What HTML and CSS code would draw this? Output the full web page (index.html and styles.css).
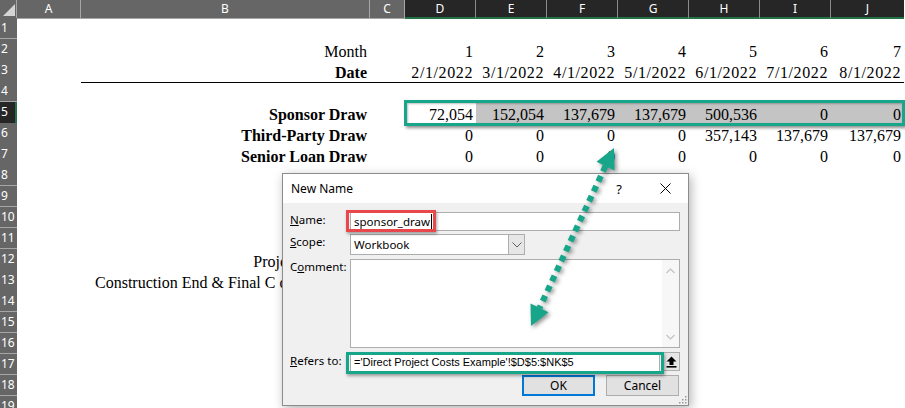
FILE: index.html
```html
<!DOCTYPE html>
<html>
<head>
<meta charset="utf-8">
<link rel="stylesheet" href="styles.css">
</head>
<body>
<div class="sheet">
  <div class="row hdr">
    <div class="corner"><svg width="17" height="18" viewBox="0 0 17 18"><polygon points="3,16 15,16 15,4" fill="#d4d4d4"/></svg></div>
    <div>A</div><div>B</div><div>C</div>
    <div class="sel">D</div><div class="sel">E</div><div class="sel">F</div><div class="sel">G</div><div class="sel">H</div><div class="sel">I</div><div class="sel last">J</div>
  </div>
  <div class="row"><div class="rn">1</div></div>
  <div class="row"><div class="rn">2</div>
    <div class="c b">Month</div>
    <div class="c d">1</div><div class="c e">2</div><div class="c f">3</div><div class="c g">4</div><div class="c h">5</div><div class="c i">6</div><div class="c j">7</div>
  </div>
  <div class="row"><div class="rn">3</div>
    <div class="rule"></div>
    <div class="c b bold">Date</div>
    <div class="c d dt">2/1/2022</div><div class="c e dt">3/1/2022</div><div class="c f dt">4/1/2022</div><div class="c g dt">5/1/2022</div><div class="c h dt">6/1/2022</div><div class="c i dt">7/1/2022</div><div class="c j dt">8/1/2022</div>
  </div>
  <div class="row"><div class="rn">4</div></div>
  <div class="row"><div class="rn sel">5</div>
    <div class="selbg"></div>
    <div class="c b bold">Sponsor Draw</div>
    <div class="c d">72,054</div><div class="c e">152,054</div><div class="c f">137,679</div><div class="c g">137,679</div><div class="c h">500,536</div><div class="c i">0</div><div class="c j">0</div>
  </div>
  <div class="row"><div class="rn">6</div>
    <div class="c b bold">Third-Party Draw</div>
    <div class="c d">0</div><div class="c e">0</div><div class="c f">0</div><div class="c g">0</div><div class="c h">357,143</div><div class="c i">137,679</div><div class="c j">137,679</div>
  </div>
  <div class="row"><div class="rn">7</div>
    <div class="c b bold">Senior Loan Draw</div>
    <div class="c d">0</div><div class="c e">0</div><div class="c f">0</div><div class="c g">0</div><div class="c h">0</div><div class="c i">0</div><div class="c j">0</div>
  </div>
  <div class="row"><div class="rn">8</div></div>
  <div class="row"><div class="rn">9</div></div>
  <div class="row"><div class="rn">10</div></div>
  <div class="row"><div class="rn">11</div></div>
  <div class="row"><div class="rn">12</div><div class="c b">Project Start Date</div></div>
  <div class="row"><div class="rn">13</div><div class="c b">Construction End &amp; Final C of O Month #</div></div>
  <div class="row"><div class="rn">14</div></div>
  <div class="row"><div class="rn">15</div></div>
  <div class="row"><div class="rn">16</div></div>
  <div class="row"><div class="rn">17</div></div>
  <div class="row"><div class="rn">18</div></div>
  <div class="row"><div class="rn">19</div></div>
</div>

<div class="range-box"></div>

<div class="dlg">
  <div class="dlg-title">
    <span class="dlg-name">New Name</span>
    <span class="tbtn">?</span>
    <span class="tbtn"><svg width="11" height="11" viewBox="0 0 11 11"><path d="M0.5 0.5 L10.5 10.5 M10.5 0.5 L0.5 10.5" stroke="#000" stroke-width="1"/></svg></span>
  </div>
  <div class="dlg-body">
    <div class="drow">
      <div class="lbl"><u>N</u>ame:</div>
      <div class="inp"><span class="caret">sponsor_draw</span></div>
    </div>
    <div class="drow m3">
      <div class="lbl"><u>S</u>cope:</div>
      <div class="combo"><span class="combo-txt">Workbook</span><span class="combo-btn"><svg width="10" height="6" viewBox="0 0 10 6"><path d="M0.5 0.5 L5 5 L9.5 0.5" fill="none" stroke="#606060" stroke-width="1"/></svg></span></div>
    </div>
    <div class="drow m4">
      <div class="lbl">C<u>o</u>mment:</div>
      <div class="area"><div class="sbar">
        <svg width="9" height="6" viewBox="0 0 9 6"><path d="M0.5 5 L4.5 1 L8.5 5" fill="none" stroke="#c2c2c2" stroke-width="1.2"/></svg>
        <svg width="9" height="6" viewBox="0 0 9 6"><path d="M0.5 1 L4.5 5 L8.5 1" fill="none" stroke="#c2c2c2" stroke-width="1.2"/></svg>
      </div></div>
    </div>
    <div class="drow m5">
      <div class="lbl"><u>R</u>efers to:</div>
      <div class="inp ref">='Direct Project Costs Example'!$D$5:$NK$5</div>
      <div class="refbtn"><svg width="11" height="12" viewBox="0 0 11 12"><polygon points="5.5,0.5 10.5,5.5 7.5,5.5 7.5,9 3.5,9 3.5,5.5 0.5,5.5" fill="#000"/><rect x="0.5" y="10" width="10" height="1.6" fill="#000"/></svg></div>
    </div>
    <div class="btns">
      <div class="btn ok">OK</div>
      <div class="btn">Cancel</div>
    </div>
  </div>
  <svg class="grip" width="9" height="9" viewBox="0 0 9 9"><g fill="#9a9a9a"><rect x="7" y="1" width="1.5" height="1.5"/><rect x="4" y="4" width="1.5" height="1.5"/><rect x="7" y="4" width="1.5" height="1.5"/><rect x="1" y="7" width="1.5" height="1.5"/><rect x="4" y="7" width="1.5" height="1.5"/><rect x="7" y="7" width="1.5" height="1.5"/></g></svg>
  <div class="name-box"></div>
  <div class="ref-box"></div>
</div>

<svg class="arrow" width="905" height="408" viewBox="0 0 905 408">
  <g fill="#17a689">
    <line x1="605.5" y1="166" x2="539.5" y2="308" stroke="#17a689" stroke-width="6" stroke-dasharray="6 5"/>
    <polygon points="614,148 614.5,170.5 596.5,161.7"/>
    <polygon points="531,326 548.5,312.2 530.5,303.6"/>
  </g>
</svg>
</body>
</html>
```

FILE: styles.css
```css
* { box-sizing: border-box; }

body {
  margin: 0;
  width: 905px;
  height: 408px;
  overflow: hidden;
  position: relative;
  background: #fff;
  font-family: "Liberation Serif", serif;
  color: #000;
}

.sheet {
  --cols: 17px 64px 289px 35px 71px 71px 71px 71px 71px 71px 73px;
}

.row {
  display: grid;
  grid-template-columns: var(--cols);
  height: 21px;
}

.row > * { grid-row: 1; }

.hdr { height: 18px; }

.hdr > div {
  background: #666;
  color: #fff;
  font: 12px "Noto Sans", sans-serif;
  line-height: 17px;
  text-align: center;
  border-right: 1px solid #a6a6a6;
  border-bottom: 1px solid #a6a6a6;
}

.corner svg { display: block; }

.hdr > .sel {
  background: #262626;
  border-right-color: #8a8a8a;
  border-bottom: 2px solid #217346;
}

.hdr > .last { border-right: none; }

.rn {
  grid-column: 1;
  background: #666;
  color: #fff;
  font: 12px "Noto Sans", sans-serif;
  line-height: 20px;
  padding-left: 1px;
  border-bottom: 1px solid #a6a6a6;
}

.rn.sel {
  background: #262626;
  border-right: 2px solid #217346;
}

.c {
  font-size: 16px;
  line-height: 21px;
  padding: 2px 3px 0 0;
  text-align: right;
  white-space: nowrap;
}

.b { grid-column: 3; }
.d { grid-column: 5; }
.e { grid-column: 6; }
.f { grid-column: 7; }
.g { grid-column: 8; }
.h { grid-column: 9; }
.i { grid-column: 10; }
.j { grid-column: 11; }

.bold { font-weight: bold; }
.dt { letter-spacing: 0.6px; }

.rule {
  grid-column: 3 / 12;
  align-self: end;
  height: 1px;
  background: #000;
}

.selbg {
  grid-column: 6 / 12;
  background: #c4c4c4;
}

.range-box {
  position: absolute;
  left: 404px;
  top: 100px;
  width: 501px;
  height: 26px;
  border: 3px solid #17a689;
  box-shadow: 2px 2px 3px rgba(0, 0, 0, 0.45), inset 1px 1px 2px rgba(0, 0, 0, 0.25);
}

/* dialog */
.dlg {
  position: absolute;
  left: 282px;
  top: 173px;
  width: 407px;
  height: 233px;
  background: #f0f0f0;
  border: 1px solid #8c8c8c;
  box-shadow: 2px 3px 10px rgba(0, 0, 0, 0.3);
  font: 11.5px "Noto Sans", sans-serif;
  color: #000;
}

.dlg-title {
  height: 29px;
  background: #fff;
  display: flex;
  align-items: center;
  padding-left: 8px;
  font-size: 12px;
}

.dlg-name { flex: 1; }

.tbtn {
  width: 46px;
  height: 29px;
  display: flex;
  align-items: center;
  justify-content: center;
  font-size: 13px;
}

.tbtn svg { display: block; }

.dlg-body {
  padding: 9px 0 0 7px;
  display: flex;
  flex-direction: column;
}

.drow { display: flex; align-items: flex-start; }
.m3 { margin-top: 3px; }
.m4 { margin-top: 4px; }
.m5 { margin-top: 5px; }

.lbl {
  width: 60px;
  line-height: 15px;
  white-space: nowrap;
}

.inp {
  width: 330px;
  height: 19px;
  background: #fff;
  border: 1px solid #adadad;
  line-height: 17px;
  padding-left: 3px;
  white-space: nowrap;
}

.caret { border-right: 1px solid #000; padding-right: 1px; }

.combo {
  width: 175px;
  height: 21px;
  background: #fff;
  border: 1px solid #adadad;
  display: flex;
}

.combo-txt { flex: 1; line-height: 19px; padding-left: 3px; }

.combo-btn {
  width: 16px;
  background: #e6e6e6;
  border-left: 1px solid #adadad;
  display: flex;
  align-items: center;
  justify-content: center;
}

.area {
  width: 330px;
  height: 89px;
  background: #fff;
  border: 1px solid #adadad;
  display: flex;
  justify-content: flex-end;
}

.sbar {
  width: 17px;
  background: #f7f7f7;
  display: flex;
  flex-direction: column;
  justify-content: space-between;
  align-items: center;
  padding: 8px 0 7px;
}

.sbar svg { display: block; }

.inp.ref {
  width: 310px;
  font-family: "Liberation Sans", sans-serif;
  font-size: 11px;
}

.refbtn {
  width: 18px;
  height: 19px;
  margin-left: 2px;
  margin-top: -1px;
  background: #e6e6e6;
  border: 1px solid #adadad;
  display: flex;
  align-items: center;
  justify-content: center;
}

.btns {
  display: flex;
  justify-content: flex-end;
  gap: 11px;
  margin-top: 3px;
  padding-right: 9px;
}

.btn {
  width: 73px;
  height: 21px;
  background: #e1e1e1;
  border: 1px solid #adadad;
  text-align: center;
  line-height: 19px;
  font-size: 12px;
}

.btn.ok { border: 2px solid #0078d7; line-height: 17px; }

.grip { position: absolute; right: 1px; bottom: 1px; }

.name-box {
  position: absolute;
  left: 63px;
  top: 36px;
  width: 90px;
  height: 22px;
  border: 3px solid #e8474b;
  box-shadow: 1px 2px 3px rgba(0, 0, 0, 0.35);
}

.ref-box {
  position: absolute;
  left: 63px;
  top: 178px;
  width: 318px;
  height: 22px;
  border: 3px solid #17a689;
  box-shadow: 1px 2px 3px rgba(0, 0, 0, 0.35);
}

.arrow {
  position: absolute;
  left: 0;
  top: 0;
  filter: drop-shadow(2px 2px 2px rgba(0, 0, 0, 0.45));
  pointer-events: none;
}
```
